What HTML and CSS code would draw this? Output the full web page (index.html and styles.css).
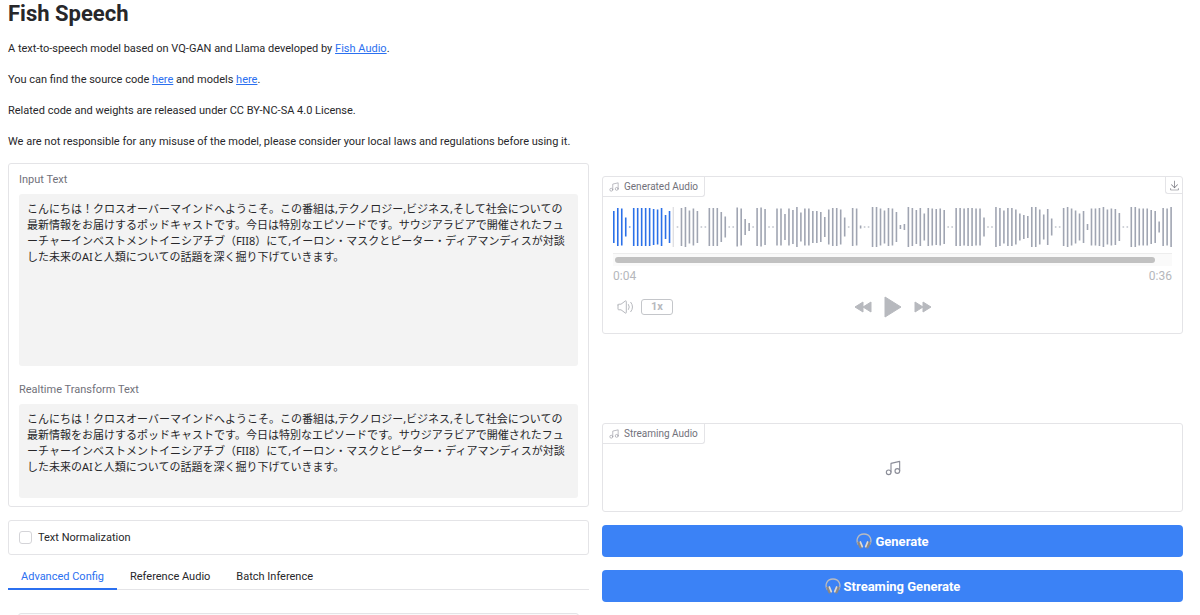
FILE: index.html
```html
<!DOCTYPE html>
<html lang="en">
<head>
<meta charset="utf-8">
<meta name="viewport" content="width=device-width, initial-scale=1">
<title>Fish Speech</title>
<link rel="stylesheet" href="styles.css">
</head>
<body>
<svg class="defs" aria-hidden="true">
  <symbol id="note" viewBox="0 0 24 24"><g fill="none" stroke="currentColor" stroke-width="1.700" stroke-linecap="round" stroke-linejoin="round"><path d="M9 18V5l13-3v14"/><circle cx="5.500" cy="18.500" r="3.500"/><circle cx="18.500" cy="16.500" r="3.500"/></g></symbol>
  <symbol id="headphones" viewBox="0 0 16 16"><path d="M2.500 12C-.8 7 2 1 8 1S16.800 7 13.500 12" fill="none" stroke="#b9bbc0" stroke-width="1.300"/><path d="M2.600 9.800l2 4.400M13.400 9.800l-2 4.400" stroke="#8d8883" stroke-width="2.600" stroke-linecap="round"/><path d="M4.400 9l1.900 4.600M11.600 9l-1.900 4.600" stroke="#e1dbd2" stroke-width="1.700" stroke-linecap="round"/></symbol>
</svg>
<main class="app">
  <header class="intro">
    <h1>Fish Speech</h1>
    <p>A text-to-speech model based on VQ-GAN and Llama developed by <a href="#">Fish Audio</a>.</p>
    <p>You can find the source code <a href="#">here</a> and models <a href="#">here</a>.</p>
    <p>Related code and weights are released under CC BY-NC-SA 4.0 License.</p>
    <p>We are not responsible for any misuse of the model, please consider your local laws and regulations before using it.</p>
  </header>
  <div class="columns">
    <section class="column">
      <div class="panel fields">
        <label for="input-text">Input Text</label>
        <textarea id="input-text" class="tall" lang="ja">こんにちは！クロスオーバーマインドへようこそ。この番組は,テクノロジー,ビジネス,そして社会についての最新情報をお届けするポッドキャストです。今日は特別なエピソードです。サウジアラビアで開催されたフューチャーインベストメントイニシアチブ（FII8）にて,イーロン・マスクとピーター・ディアマンディスが対談した未来のAIと人類についての話題を深く掘り下げていきます。</textarea>
        <label for="transform-text">Realtime Transform Text</label>
        <textarea id="transform-text" class="short" lang="ja" readonly>こんにちは！クロスオーバーマインドへようこそ。この番組は,テクノロジー,ビジネス,そして社会についての最新情報をお届けするポッドキャストです。今日は特別なエピソードです。サウジアラビアで開催されたフューチャーインベストメントイニシアチブ（FII8）にて,イーロン・マスクとピーター・ディアマンディスが対談した未来のAIと人類についての話題を深く掘り下げていきます。</textarea>
      </div>
      <div class="panel check">
        <input type="checkbox" id="normalize"><label for="normalize">Text Normalization</label>
      </div>
      <div class="tabs" role="tablist">
        <button role="tab" aria-selected="true" class="tab active">Advanced Config</button>
        <button role="tab" aria-selected="false" class="tab">Reference Audio</button>
        <button role="tab" aria-selected="false" class="tab">Batch Inference</button>
      </div>
      <div class="panel config"></div>
    </section>
    <section class="column right">
      <div class="panel audio">
        <div class="panel-head">
          <h2 class="tag"><svg><use href="#note"/></svg>Generated Audio</h2>
          <button class="download" aria-label="Download"><svg viewBox="0 0 32 32"><path d="M26 24v4H6v-4H4v4a2 2 0 0 0 2 2h20a2 2 0 0 0 2-2v-4zM26 14l-1.410-1.410L17 20.170V2h-2v18.170l-7.590-7.580L6 14l10 10z" fill="currentColor"/></svg></button>
        </div>
        <div class="player">
          <svg class="wave" id="wave" viewBox="0 0 561 40" preserveAspectRatio="none" role="img" aria-label="Waveform"></svg>
          <div class="scroll"><div class="thumb"></div></div>
          <div class="times"><time>0:04</time><time>0:36</time></div>
          <div class="controls">
            <div class="settings">
              <button aria-label="Volume"><svg class="volume" viewBox="0 0 18 14"><g fill="none" stroke="currentColor" stroke-width="1" stroke-linecap="round" stroke-linejoin="round"><path d="M1 5v4q0 .8.800.800H4L8.300 13q1 .6 1-.5v-11q0-1.100-1-.5L4 4.200H1.800Q1 4.200 1 5z"/><path d="M11.500 4.500q1.700 2.500 0 5M13.800 2.300q3.600 4.700 0 9.400"/></g></svg></button>
              <button class="speed">1x</button>
            </div>
            <div class="transport">
              <button aria-label="Rewind"><svg class="skip" viewBox="0 0 18 12"><path d="M9 1v10L1 6zM17 1v10L9 6z" fill="currentColor" stroke="currentColor" stroke-linejoin="round"/></svg></button>
              <button aria-label="Play"><svg class="play" viewBox="0 0 18 22"><path d="M1 1v20l16-10z" fill="currentColor" stroke="currentColor" stroke-linejoin="round"/></svg></button>
              <button aria-label="Forward"><svg class="skip" viewBox="0 0 18 12"><path d="M1 1v10l8-5zM9 1v10l8-5z" fill="currentColor" stroke="currentColor" stroke-linejoin="round"/></svg></button>
            </div>
          </div>
        </div>
      </div>
      <div class="panel streaming">
        <div class="panel-head"><h2 class="tag"><svg><use href="#note"/></svg>Streaming Audio</h2></div>
        <div class="empty"><svg><use href="#note"/></svg></div>
      </div>
      <button class="primary"><svg><use href="#headphones"/></svg>Generate</button>
      <button class="primary"><svg><use href="#headphones"/></svg>Streaming Generate</button>
    </section>
  </div>
</main>
<script src="wave.js"></script>
</body>
</html>
```
FILE: styles.css
```css
* { box-sizing: border-box; }
body { margin: 0; background: #fff; color: #27272a; font: 11px/19px Roboto, "Noto Sans CJK JP", sans-serif; overflow: hidden; }
button { font: inherit; color: inherit; background: none; border: 0; padding: 0; cursor: pointer; }
svg { display: block; }
.defs { display: none; }
.app { padding: 0 17px 0 8px; }
.intro h1 { margin: 0 0 12px; font-size: 22px; line-height: 27px; font-weight: 700; }
.intro p { margin: 0 0 12px; }
.intro a { color: #2b70f0; }
.columns { display: grid; grid-template-columns: 1fr 1fr; gap: 13px; align-items: start; }
.column { min-width: 0; display: flex; flex-direction: column; }
.right { padding-top: 13px; }
.panel { border: 1px solid #e4e4e7; border-radius: 3px; }
.fields { padding: 6px 10px 8px; display: flex; flex-direction: column; }
.fields label { color: #71717a; margin-bottom: 5px; }
textarea { display: block; width: 100%; border: 0; border-radius: 3px; resize: none; padding: 7px 8px; background: #f3f3f3; color: #27272a; font: 11px/16px "Noto Sans", "Noto Sans CJK JP", sans-serif; line-break: loose; overflow: hidden; outline: 0; }
.tall { height: 172px; margin-bottom: 14px; }
.short { height: 94px; }
.check { margin-top: 13px; padding: 7px 10px; display: flex; align-items: center; gap: 6px; }
.check input { appearance: none; width: 13px; height: 13px; margin: 0; border: 1px solid #d4d4d8; border-radius: 3px; background: #fff; }
.tabs { margin-top: 9px; display: flex; border-bottom: 1px solid #e4e4e7; }
.tab { padding: 3px 13px 2px; border-bottom: 2px solid transparent; margin-bottom: -1px; }
.tab.active { color: #2b70f0; border-color: #2b70f0; }
.config { margin: 23px 10px 0; height: 30px; background: #fafafa; }
.panel-head { display: flex; justify-content: space-between; align-items: flex-start; }
.tag { margin: 0; display: flex; align-items: center; gap: 5px; padding: 0 6px; height: 20px; border: solid #e4e4e7; border-width: 0 1px 1px 0; border-radius: 0 0 3px 0; color: #71717a; font-size: 10px; font-weight: 400; }
.tag svg { width: 10px; height: 10px; color: #a1a1aa; }
.download { width: 17px; height: 17px; border: solid #e4e4e7; border-width: 0 0 1px 1px; border-radius: 0 0 0 3px; color: #71717a; display: grid; place-items: center; }
.download svg { width: 11px; height: 11px; }
.player { padding: 10px 10px 15px; }
.wave { width: 100%; height: 40px; }
.played { fill: #2b70e8; }
.ahead { fill: #a0a5b2; }
.cursor { fill: #d4d4d8; }
.scroll { margin-top: 6px; border-top: 1px solid #ededed; background: #fafafa; padding: 3px 17px 3px 2px; }
.thumb { height: 6px; border-radius: 3px; background: #c1c1c1; }
.times { margin-top: 1px; display: flex; justify-content: space-between; color: #b5b7bc; font-size: 12px; }
.controls { margin-top: 10px; display: grid; grid-template-columns: 1fr auto 1fr; align-items: center; color: #b7b9be; }
.settings, .transport { display: flex; align-items: center; }
.settings { gap: 6px; padding-left: 4px; }
.transport { gap: 12px; }
.volume { width: 18px; height: 14px; }
.speed { width: 32px; height: 16px; border: 1px solid #c4c6ca; border-radius: 3px; line-height: 14px; font-weight: 700; }
.skip { width: 18px; height: 12px; }
.play { width: 18px; height: 22px; }
.streaming { margin: 89px 0 13px; }
.empty { height: 67px; padding-top: 16px; display: flex; justify-content: center; color: #8b8d98; }
.empty svg { width: 16px; height: 16px; }
.primary { display: flex; align-items: center; justify-content: center; gap: 3px; height: 32px; border-radius: 4px; background: #3b82f6; color: #fff; font-size: 13px; font-weight: 700; }
.primary + .primary { margin-top: 13px; }
.primary svg { width: 16px; height: 16px; }
```
FILE: wave.js
```js
const heights = [
  32, 38, 37, 19, 1, 38, 38, 38, 38, 38, 36, 35, 38, 24, 32, 40, 1, 38, 40, 33,
  37, 32, 1, 1, 38, 38, 38, 30, 21, 1, 1, 39, 37, 16, 8, 1, 38, 39, 36, 1,
  1, 37, 37, 26, 37, 34, 40, 29, 37, 37, 32, 32, 30, 20, 35, 38, 38, 35, 19, 1,
  38, 37, 3, 1, 1, 40, 40, 37, 33, 38, 37, 30, 4, 6, 40, 38, 34, 38, 27, 38,
  37, 36, 37, 34, 1, 1, 38, 38, 37, 38, 38, 37, 37, 19, 1, 1, 40, 38, 33, 38,
  38, 35, 27, 24, 22, 40, 40, 35, 25, 36, 17, 1, 1, 38, 40, 37, 33, 27, 32, 6,
  37, 37, 38, 40, 35, 37, 36, 28, 1, 1, 40, 40, 37, 37, 37, 34, 32, 11, 38, 37, 40
];
const playhead = 15;
const wave = document.getElementById("wave");
heights.forEach((h, i) => {
  const bar = document.createElementNS("http://www.w3.org/2000/svg", "rect");
  const width = i === playhead ? 1 : 1.6;
  bar.setAttribute("x", i * 3.995);
  bar.setAttribute("y", 20 - h / 2);
  bar.setAttribute("width", width);
  bar.setAttribute("height", h);
  bar.setAttribute("class", i < playhead ? "played" : i === playhead ? "cursor" : "ahead");
  wave.append(bar);
});
```
